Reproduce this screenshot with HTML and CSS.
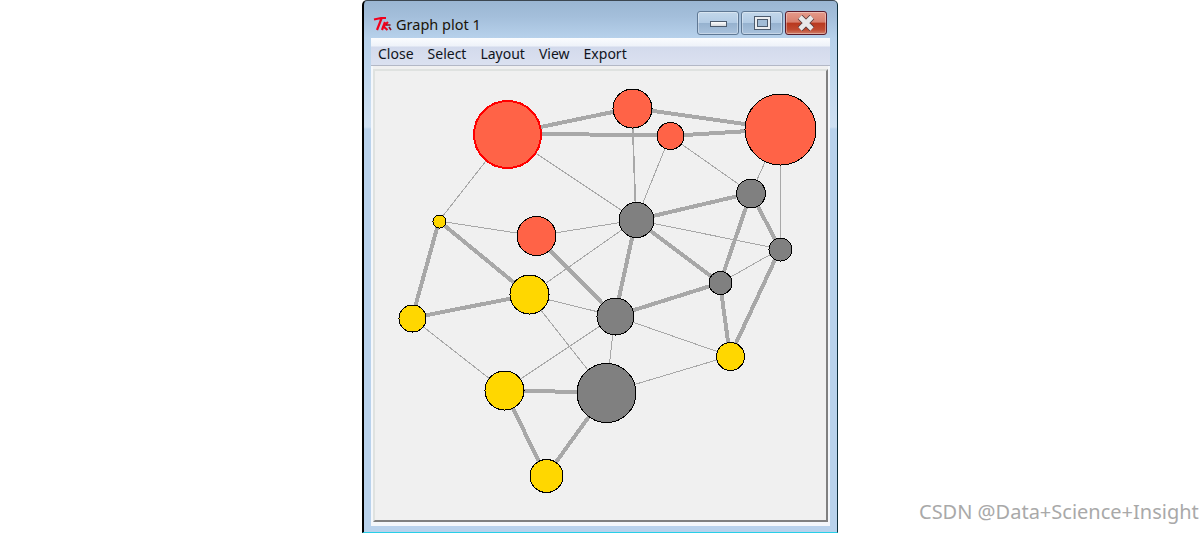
FILE: index.html
```html
<!DOCTYPE html>
<html lang="en">
<head>
<meta charset="utf-8">
<title>Graph plot 1</title>
<link rel="stylesheet" href="styles.css">
</head>
<body>
<div class="stage">
  <div class="window">
    <header class="titlebar">
      <svg class="tk-logo" viewBox="0 0 20 16" width="20" height="16" aria-hidden="true">
        <path class="tk-red" d="M1 3.5 L8 2 L13 2 M8.5 2.5 L4 14 M12 6 L9 14 M15 6 L10.5 10.5 L14.5 14"/>
        <path class="tk-dark" d="M13 9 L17.5 9 M16 11 L18 14"/>
      </svg>
      <span class="title">Graph plot 1</span>
      <div class="controls">
        <button class="ctl"><span class="ctl-min"></span></button>
        <button class="ctl"><span class="ctl-max"></span></button>
        <button class="ctl ctl-close">
          <svg viewBox="0 0 20 16" width="20" height="16" aria-hidden="true">
            <path class="x-out" d="M4 2 L16 14 M16 2 L4 14"/>
            <path class="x-in" d="M4 2 L16 14 M16 2 L4 14"/>
          </svg>
        </button>
      </div>
    </header>
    <div class="client">
      <nav class="menu">
        <span>Close</span><span>Select</span><span>Layout</span><span>View</span><span>Export</span>
      </nav>
      <div class="canvas">
        <svg class="graph" viewBox="375 71 451 449" width="451" height="449" role="img" aria-label="Network graph">
          <g class="thin">
            <line x1="507" y1="134" x2="439" y2="221"/>
            <line x1="507" y1="134" x2="636" y2="220"/>
            <line x1="439" y1="221" x2="536" y2="236"/>
            <line x1="536" y1="236" x2="636" y2="220"/>
            <line x1="529" y1="295" x2="636" y2="220"/>
            <line x1="670" y1="136" x2="636" y2="220"/>
            <line x1="670" y1="136" x2="751" y2="193"/>
            <line x1="780" y1="129" x2="751" y2="193"/>
            <line x1="780" y1="129" x2="780" y2="249"/>
            <line x1="636" y1="220" x2="780" y2="249"/>
            <line x1="780" y1="249" x2="720" y2="283"/>
            <line x1="529" y1="295" x2="615" y2="316"/>
            <line x1="529" y1="295" x2="606" y2="393"/>
            <line x1="615" y1="316" x2="504" y2="390"/>
            <line x1="615" y1="316" x2="606" y2="393"/>
            <line x1="615" y1="316" x2="730" y2="356"/>
            <line x1="606" y1="393" x2="730" y2="356"/>
            <line x1="412" y1="318" x2="504" y2="390"/>
          </g>
          <line class="mid" x1="632" y1="108" x2="636" y2="220"/>
          <g class="thick">
            <line x1="507" y1="134" x2="632" y2="108"/>
            <line x1="507" y1="134" x2="670" y2="135"/>
            <line x1="632" y1="108" x2="780" y2="129"/>
            <line x1="670" y1="136" x2="780" y2="129"/>
            <line x1="751" y1="193" x2="636" y2="220"/>
            <line x1="751" y1="193" x2="720" y2="283"/>
            <line x1="751" y1="193" x2="780" y2="249"/>
            <line x1="636" y1="220" x2="720" y2="283"/>
            <line x1="636" y1="220" x2="615" y2="316"/>
            <line x1="536" y1="236" x2="615" y2="316"/>
            <line x1="439" y1="221" x2="529" y2="295"/>
            <line x1="439" y1="221" x2="412" y2="318"/>
            <line x1="412" y1="318" x2="529" y2="295"/>
            <line x1="720" y1="283" x2="615" y2="316"/>
            <line x1="720" y1="283" x2="730" y2="356"/>
            <line x1="780" y1="249" x2="730" y2="356"/>
            <line x1="504" y1="390" x2="606" y2="393"/>
            <line x1="504" y1="390" x2="546" y2="476"/>
            <line x1="606" y1="393" x2="546" y2="476"/>
          </g>
          <g class="nodes">
            <circle class="red selected" cx="507.5" cy="134.5" r="33.5"/>
            <circle class="red" cx="632.5" cy="108.5" r="19.5"/>
            <circle class="red" cx="670.5" cy="136" r="13.5"/>
            <circle class="red" cx="780.5" cy="129.5" r="35.5"/>
            <circle class="red" cx="536.5" cy="236" r="19.5"/>
            <circle class="grey" cx="751" cy="193.5" r="14.5"/>
            <circle class="grey" cx="636.5" cy="220" r="17.5"/>
            <circle class="grey" cx="780.5" cy="249.5" r="11.5"/>
            <circle class="grey" cx="720.5" cy="283" r="11.5"/>
            <circle class="grey" cx="615.5" cy="316.5" r="18.5"/>
            <circle class="grey" cx="606.5" cy="393" r="29.5"/>
            <circle class="gold" cx="439.5" cy="221.5" r="6.5"/>
            <circle class="gold" cx="529.5" cy="294.5" r="19.5"/>
            <circle class="gold" cx="412.5" cy="318.5" r="13.5"/>
            <circle class="gold" cx="730.5" cy="356.5" r="14"/>
            <circle class="gold" cx="504.5" cy="390.5" r="19.5"/>
            <circle class="gold" cx="546.5" cy="476" r="16.5"/>
          </g>
        </svg>
      </div>
    </div>
  </div>
  <div class="watermark">CSDN @Data+Science+Insight</div>
</div>
</body>
</html>
```
FILE: styles.css
```css
* { box-sizing: border-box; }
html, body { margin: 0; padding: 0; background: #fff; }
body { width: 1200px; height: 533px; overflow: hidden; font-family: "Noto Sans", "Open Sans", sans-serif; }
.stage { position: relative; width: 1200px; height: 533px; display: flex; justify-content: center; }

.window {
  width: 476px; height: 533px;
  display: flex; flex-direction: column;
  border-left: 2px solid #000;
  border-right: 1px solid #0e2f3c;
  border-top: 1px solid #3b4650;
  border-bottom: 1px solid #28cfe8;
  border-radius: 5px 5px 0 0;
  padding: 0 7px 6px 7px;
  background: linear-gradient(180deg, #9ab6d3 0, #a4bfdb 16px, #b7d1eb 37px, #cfe0f2 126px, #b9d2ec 128px, #b9d2ec 100%);
}

.titlebar { height: 37px; flex: none; display: flex; align-items: flex-start; color: #111; }
.tk-logo { margin: 15px 0 0 2px; flex: none; }
.tk-red { fill: none; stroke: #f0001c; stroke-width: 2.2; }
.tk-dark { fill: none; stroke: #8a1020; stroke-width: 1.6; }
.title { margin: 13px 0 0 3px; font-size: 14.5px; line-height: 20px; color: #1a1408; }
.controls { margin: 10px 3px 0 auto; display: flex; gap: 2px; }
.ctl {
  width: 42px; height: 24px; padding: 0;
  display: flex; align-items: center; justify-content: center;
  border: 1px solid #5f7894;
  border-radius: 3px;
  background: linear-gradient(180deg, #c3d7ea 0, #b2cbe4 48%, #96b2cf 52%, #a9c2dc 100%);
  box-shadow: inset 0 0 0 1px rgba(255,255,255,.35);
}
.ctl-min { display: block; width: 17px; height: 6px; margin-top: 2px; background: linear-gradient(180deg, #fff, #d4d8dd); border: 1px solid #4c5a6c; }
.ctl-max { display: block; width: 17px; height: 14px; background: #a2bcd6; border: 3px solid #eceef1; outline: 1px solid #4c5a6c; outline-offset: -1px; box-shadow: inset 0 0 0 1px #4c5a6c; }
.ctl-close {
  border-color: #5a1a2a;
  background: linear-gradient(180deg, #e59a8a 0, #d8806e 45%, #b9391f 52%, #c04a30 80%, #d0806c 100%);
}
.x-out { fill: none; stroke: #5b3a3a; stroke-width: 6.4; }
.x-in { fill: none; stroke: #e9e9ea; stroke-width: 4.6; }

.client { flex: 1; display: flex; flex-direction: column; background: #f0f0f0; border: 0 solid #f4f7fb; border-width: 0 2px 4px 2px; min-height: 0; margin-left: 0; }
.menu {
  height: 28px; flex: none;
  margin: 0 -2px;
  padding: 6px 0 0 7px;
  display: flex; gap: 14px;
  font-size: 14px; line-height: 20px; color: #10141c;
  background: linear-gradient(180deg, #fbfcfe 0, #eef2f9 8px, #d3daec 9px, #dbe1f0 100%);
  border-bottom: 1px solid #b3b8c6;
}
.canvas {
  margin-top: 3px; flex: none;
  width: 455px; height: 453px;
  border: 2px solid;
  border-color: #dfe2e0 #808080 #808080 #dfe2e0;
  background: #f0f0f0;
}
.graph { display: block; shape-rendering: crispEdges; }
.thin line { stroke: #a8a8a8; stroke-width: 1; }
.mid { stroke: #a8a8a8; stroke-width: 1.6; }
.thick line { stroke: #a8a8a8; stroke-width: 4; }
.nodes circle { stroke: #000; stroke-width: 1; }
.red { fill: #ff6347; }
.grey { fill: #808080; }
.gold { fill: #ffd700; }
.nodes .selected { stroke: #ff0000; stroke-width: 2; }

.watermark {
  position: absolute; left: 919px; top: 498px;
  font-size: 20px; line-height: 28px; color: #a9a9a9;
  white-space: nowrap;
}
```
